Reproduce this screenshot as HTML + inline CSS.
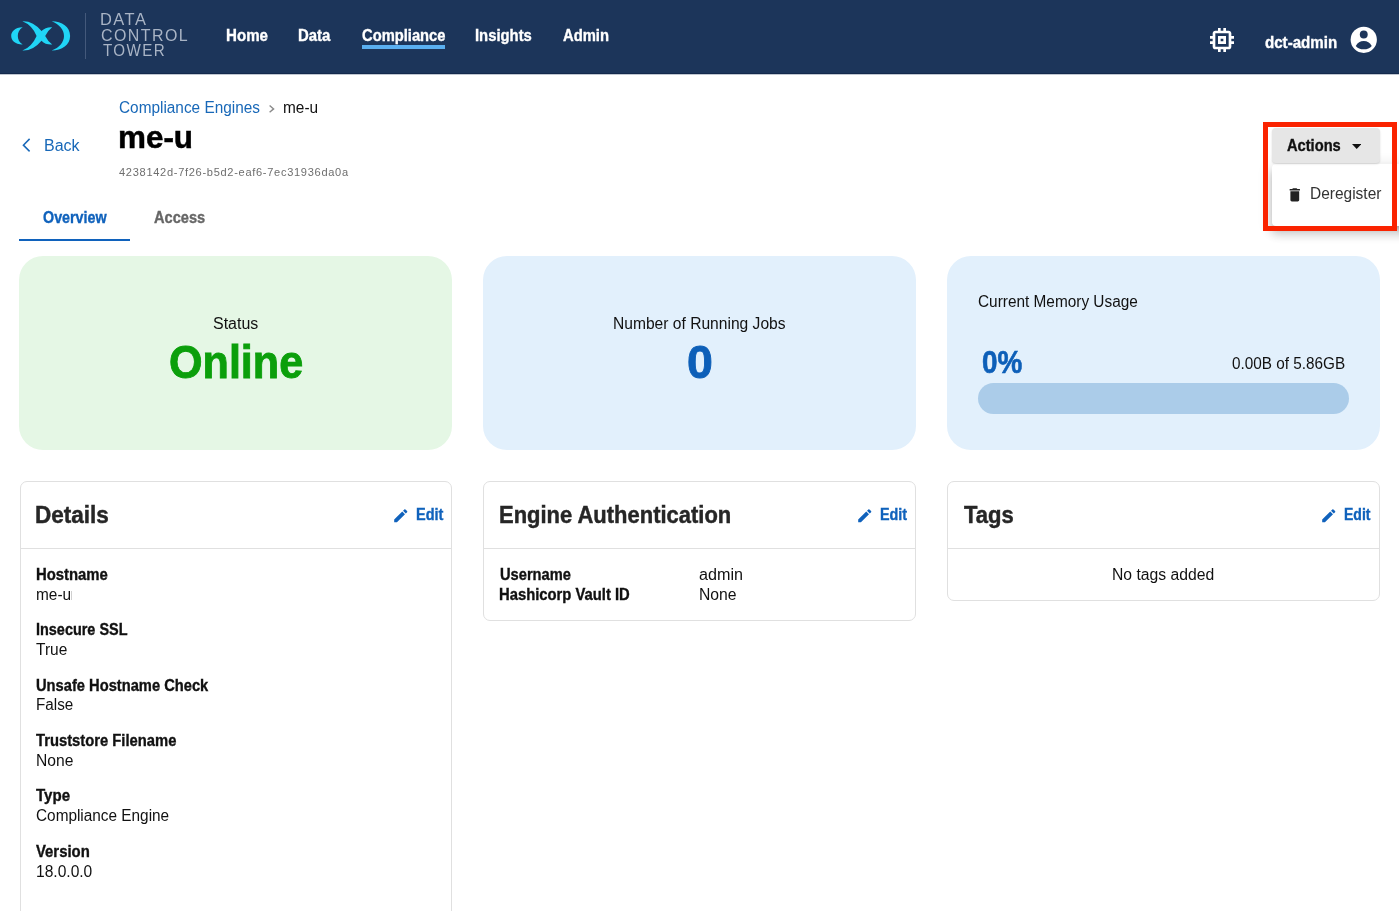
<!DOCTYPE html>
<html lang="en">
<head>
<meta charset="utf-8">
<title>Data Control Tower</title>
<style>
*{box-sizing:border-box;margin:0;padding:0}
html,body{width:1399px;height:911px;overflow:hidden;background:#fff}
body{font-family:"Liberation Sans",sans-serif;color:#111;position:relative}
.abs{position:absolute}
.t{position:absolute;white-space:nowrap;line-height:1;transform-origin:0 0;display:block}
#hdr{position:absolute;left:0;top:0;width:1399px;height:74px;background:#1c355a;border-bottom:1px solid #14294c}
#vdiv{position:absolute;left:85px;top:12.5px;width:1.3px;height:46px;background:#44597b}
#navul{position:absolute;left:362px;top:45px;width:83px;height:4px;background:#5aaff0}
#tabul{position:absolute;left:19.4px;top:239px;width:111px;height:2px;background:#1062bc}
.stat{position:absolute;top:256px;width:433px;height:194px;border-radius:24px}
#s1{left:19px;background:#e5f7e5}
#s2{left:483px;background:#e2f0fc}
#s3{left:947px;background:#e2f0fc}
#bar{position:absolute;left:978px;top:383.3px;width:370.5px;height:31.2px;border-radius:16px;background:#abcce9}
.panel{position:absolute;top:481px;width:433px;border:1px solid #e0e0e0;border-radius:7px;background:#fff}
.ph{position:absolute;left:0;top:0;width:100%;height:67px;border-bottom:1px solid #e0e0e0}
#menu{position:absolute;left:1272px;top:164px;width:150px;height:61.500px;background:#fff;border-radius:4px;box-shadow:0 5px 5px -3px rgba(0,0,0,.2),0 8px 10px 1px rgba(0,0,0,.14),0 3px 14px 2px rgba(0,0,0,.12)}
#abtn{position:absolute;left:1272px;top:128.3px;width:107.5px;height:34.5px;background:#e6e6e6;border-radius:4px;box-shadow:0 1px 2px rgba(0,0,0,.15)}
#red{position:absolute;left:1263px;top:121.5px;width:134px;height:109.3px;border:5px solid #fa2300}
</style>
</head>
<body>
<div id="hdr"></div>
<div id="hedge" style="position:absolute;left:0;top:74px;width:1399px;height:1px;background:rgba(28,53,90,.28)"></div>
<svg class="abs" style="left:0;top:0" width="90" height="74" viewBox="0 0 90 74">
  <g fill="#20d5f6">
    <path d="M22.7 27.3 C14.500 27.4 11.200 32 11.200 35.900 C11.200 39.800 14.500 44.400 22.700 44.500 C19.200 42.400 17.800 39 17.800 35.900 C17.800 32.800 19.200 29.400 22.700 27.300Z"/>
    <path d="M22.4 21.3 Q33 20.8 41.5 31.1 L45.2 35.9 Q47.9 41.3 52.2 44.5 Q45.7 45 41.5 40.7 L36.6 35.9 Q31.9 25 22.4 21.3Z"/>
    <path d="M 22.4 50.5 Q 33.0 51.0 41.5 40.7 L 45.2 35.9 Q 47.9 30.5 52.2 27.3 Q 45.7 26.8 41.5 31.1 L 36.6 35.9 Q 31.9 46.8 22.4 50.5 Z"/>
    <path d="M51.600 21.300 C62 21.500 70.100 27 70.100 35.900 C70.100 44.800 62 50.300 51.600 50.500 C59.500 47.500 64 41.800 64 35.900 C64 30 59.500 24.300 51.600 21.300Z"/>
  </g>
</svg>
<div id="vdiv"></div>
<div id="navul"></div>
<svg class="abs" style="left:1206px;top:23.5px" width="32" height="32" viewBox="0 0 24 24"><path fill="#fff" d="M15 9H9v6h6V9zm-2 4h-2v-2h2v2zm8-2V9h-2V7c0-1.100-.900-2-2-2h-2V3h-2v2h-2V3H9v2H7c-1.100 0-2 .900-2 2v2H3v2h2v2H3v2h2v2c0 1.100.900 2 2 2h2v2h2v-2h2v2h2v-2h2c1.100 0 2-.900 2-2v-2h2v-2h-2v-2h2zm-4 6H7V7h10v10z"/></svg>
<svg class="abs" style="left:1348.4px;top:24px" width="31.500" height="31.500" viewBox="0 0 24 24"><circle cx="12" cy="12" r="10" fill="#fff"/><circle cx="12" cy="8" r="3" fill="#1c355a"/><path fill="#1c355a" d="M5.900 16.700 Q8 13 12 13 Q16 13 18.100 16.700 Q16 19.300 12 19.300 Q8 19.300 5.900 16.700Z"/></svg>

<svg class="abs" style="left:266px;top:102px" width="12" height="14" viewBox="0 0 12 14"><path d="M3.600 3.500 L7.600 6.900 L3.600 10.300" fill="none" stroke="#8a8a8a" stroke-width="1.400"/></svg>
<svg class="abs" style="left:20px;top:136px" width="14" height="18" viewBox="0 0 14 18"><path d="M9.600 2.900 L3.400 9.150 L9.600 15.400" fill="none" stroke="#1868b8" stroke-width="1.500"/></svg>
<div id="tabul"></div>

<div class="stat" id="s1"></div>
<div class="stat" id="s2"></div>
<div class="stat" id="s3"></div>
<div id="bar"></div>

<div class="panel" style="left:20px;width:432px;height:460px;border-bottom-left-radius:0;border-bottom-right-radius:0"><div class="ph"></div></div>
<div class="panel" style="left:483px;height:140px"><div class="ph"></div></div>
<div class="panel" style="left:947px;height:120px"><div class="ph"></div></div>
<svg class="abs" style="left:392.3px;top:506.7px" width="17.500" height="17.500" viewBox="0 0 24 24"><path fill="#1062bc" d="M3 17.250V21h3.750L17.810 9.940l-3.750-3.750L3 17.250zM20.710 7.040c.390-.390.390-1.020 0-1.410l-2.340-2.340c-.390-.390-1.020-.390-1.410 0l-1.830 1.830 3.750 3.750 1.830-1.830z"/></svg>
<svg class="abs" style="left:856.2px;top:506.7px" width="17.500" height="17.500" viewBox="0 0 24 24"><path fill="#1062bc" d="M3 17.250V21h3.750L17.810 9.940l-3.750-3.750L3 17.250zM20.710 7.040c.390-.390.390-1.020 0-1.410l-2.340-2.340c-.390-.390-1.020-.390-1.410 0l-1.830 1.830 3.750 3.750 1.830-1.830z"/></svg>
<svg class="abs" style="left:1319.7px;top:506.7px" width="17.500" height="17.500" viewBox="0 0 24 24"><path fill="#1062bc" d="M3 17.250V21h3.750L17.810 9.940l-3.750-3.750L3 17.250zM20.710 7.040c.390-.390.390-1.020 0-1.410l-2.340-2.340c-.390-.390-1.020-.390-1.410 0l-1.830 1.830 3.750 3.750 1.830-1.830z"/></svg>

<div id="cur" style="position:absolute;left:70.5px;top:590.5px;width:1px;height:9.500px;background:#cfcfcf"></div>
<div id="menu"></div>
<div id="abtn"></div>
<svg class="abs" style="left:1351.7px;top:144.1px" width="9.400" height="5" viewBox="0 0 10 5.200" preserveAspectRatio="none"><path d="M0 0 L10 0 L5 5.200Z" fill="#111"/></svg>
<svg class="abs" style="left:1286.3px;top:185.6px" width="17.600" height="17.600" viewBox="0 0 24 24"><path fill="#222" d="M6 19c0 1.100.900 2 2 2h8c1.100 0 2-.900 2-2V7H6v12zM19 4h-3.500l-1-1h-5l-1 1H5v2h14V4z"/></svg>
<div id="tx" style="position:absolute;left:0;top:0;width:1399px;height:911px;will-change:transform">
<span class="t" id="dct1" style="left:100.00px;top:11.50px;font-size:16px;color:#a9b4c5;transform:scaleX(1.0269);letter-spacing:1.45px">DATA</span>
<span class="t" id="dct2" style="left:101.00px;top:27.50px;font-size:16px;color:#a9b4c5;transform:scaleX(0.9969);letter-spacing:1.45px">CONTROL</span>
<span class="t" id="dct3" style="left:103.00px;top:42.50px;font-size:16px;color:#a9b4c5;transform:scaleX(0.9477);letter-spacing:1.45px">TOWER</span>
<span class="t" id="n1" style="left:226.00px;top:27.50px;font-size:16px;font-weight:bold;color:#fff;transform:scaleX(0.9438);-webkit-text-stroke:0.35px #fff">Home</span>
<span class="t" id="n2" style="left:298.00px;top:27.50px;font-size:16px;font-weight:bold;color:#fff;transform:scaleX(0.9331);-webkit-text-stroke:0.35px #fff">Data</span>
<span class="t" id="n3" style="left:362.00px;top:27.50px;font-size:16px;font-weight:bold;color:#fff;transform:scaleX(0.9202);-webkit-text-stroke:0.35px #fff">Compliance</span>
<span class="t" id="n4" style="left:475.00px;top:27.50px;font-size:16px;font-weight:bold;color:#fff;transform:scaleX(0.9262);-webkit-text-stroke:0.35px #fff">Insights</span>
<span class="t" id="n5" style="left:563.00px;top:27.50px;font-size:16px;font-weight:bold;color:#fff;transform:scaleX(0.9235);-webkit-text-stroke:0.35px #fff">Admin</span>
<span class="t" id="user" style="left:1265.00px;top:34.50px;font-size:16px;font-weight:bold;color:#fff;transform:scaleX(0.9431);-webkit-text-stroke:0.35px #fff">dct-admin</span>
<span class="t" id="bc1" style="left:119.00px;top:99.50px;font-size:16px;color:#1868b8;transform:scaleX(0.9601)">Compliance Engines</span>
<span class="t" id="bc2" style="left:283.00px;top:99.50px;font-size:16px;color:#111;transform:scaleX(0.9630)">me-u</span>
<span class="t" id="back" style="left:44.00px;top:137.50px;font-size:16px;color:#1868b8;transform:scaleX(1.0011)">Back</span>
<span class="t" id="title" style="left:118.00px;top:121.75px;font-size:30.5px;font-weight:bold;color:#000;transform:scaleX(1.0301);-webkit-text-stroke:0.5px #000">me-u</span>
<span class="t" id="uuid" style="left:119.00px;top:166.50px;font-size:11px;color:#6e6e6e;transform:scaleX(1.0071);letter-spacing:0.68px">4238142d-7f26-b5d2-eaf6-7ec31936da0a</span>
<span class="t" id="tab1" style="left:43.00px;top:209.50px;font-size:16px;font-weight:bold;color:#1062bc;transform:scaleX(0.8946);-webkit-text-stroke:0.35px #1062bc">Overview</span>
<span class="t" id="tab2" style="left:154.00px;top:209.50px;font-size:16px;font-weight:bold;color:#666;transform:scaleX(0.9122);-webkit-text-stroke:0.35px #666">Access</span>
<span class="t" id="status" style="left:213.00px;top:315.50px;font-size:16px;color:#111;transform:scaleX(0.9970)">Status</span>
<span class="t" id="online" style="left:169.00px;top:338.75px;font-size:46.5px;font-weight:bold;color:#0b9f0b;transform:scaleX(0.9273);-webkit-text-stroke:0.9px #0b9f0b">Online</span>
<span class="t" id="jobs" style="left:613.00px;top:315.50px;font-size:16px;color:#111;transform:scaleX(0.9748)">Number of Running Jobs</span>
<span class="t" id="zero" style="left:687.00px;top:338.75px;font-size:46.5px;font-weight:bold;color:#0d5fb8;transform:scaleX(0.9998);-webkit-text-stroke:0.9px #0d5fb8">0</span>
<span class="t" id="mem" style="left:978.00px;top:293.50px;font-size:16px;color:#111;transform:scaleX(0.9612)">Current Memory Usage</span>
<span class="t" id="pct" style="left:982.00px;top:346.00px;font-size:32px;font-weight:bold;color:#0d5fb8;transform:scaleX(0.8711);-webkit-text-stroke:0.6px #0d5fb8">0%</span>
<span class="t" id="memv" style="left:1232.00px;top:355.50px;font-size:16px;color:#111;transform:scaleX(0.9558)">0.00B of 5.86GB</span>
<span class="t" id="p1t" style="left:35.00px;top:502.50px;font-size:24px;font-weight:bold;color:#262626;transform:scaleX(0.9383);-webkit-text-stroke:0.45px #262626">Details</span>
<span class="t" id="e1" style="left:416.00px;top:506.50px;font-size:16px;font-weight:bold;color:#1062bc;transform:scaleX(0.9058);-webkit-text-stroke:0.35px #1062bc">Edit</span>
<span class="t" id="k1" style="left:36.00px;top:566.50px;font-size:16px;font-weight:bold;color:#111;transform:scaleX(0.9284);-webkit-text-stroke:0.35px #111">Hostname</span>
<span class="t" id="v1" style="left:36.00px;top:586.50px;font-size:16px;color:#111;transform:scaleX(0.9621)">me-u</span>
<span class="t" id="k2" style="left:36.00px;top:621.50px;font-size:16px;font-weight:bold;color:#111;transform:scaleX(0.9025);-webkit-text-stroke:0.35px #111">Insecure SSL</span>
<span class="t" id="v2" style="left:36.00px;top:641.50px;font-size:16px;color:#111;transform:scaleX(0.9670)">True</span>
<span class="t" id="k3" style="left:36.00px;top:677.50px;font-size:16px;font-weight:bold;color:#111;transform:scaleX(0.9181);-webkit-text-stroke:0.35px #111">Unsafe Hostname Check</span>
<span class="t" id="v3" style="left:36.00px;top:696.50px;font-size:16px;color:#111;transform:scaleX(0.9516)">False</span>
<span class="t" id="k4" style="left:36.00px;top:732.50px;font-size:16px;font-weight:bold;color:#111;transform:scaleX(0.9233);-webkit-text-stroke:0.35px #111">Truststore Filename</span>
<span class="t" id="v4" style="left:36.00px;top:752.50px;font-size:16px;color:#111;transform:scaleX(0.9770)">None</span>
<span class="t" id="k5" style="left:36.00px;top:787.50px;font-size:16px;font-weight:bold;color:#111;transform:scaleX(0.9421);-webkit-text-stroke:0.35px #111">Type</span>
<span class="t" id="v5" style="left:36.00px;top:807.50px;font-size:16px;color:#111;transform:scaleX(0.9596)">Compliance Engine</span>
<span class="t" id="k6" style="left:36.00px;top:843.50px;font-size:16px;font-weight:bold;color:#111;transform:scaleX(0.9296);-webkit-text-stroke:0.35px #111">Version</span>
<span class="t" id="v6" style="left:36.00px;top:863.50px;font-size:16px;color:#111;transform:scaleX(0.9732)">18.0.0.0</span>
<span class="t" id="p2t" style="left:499.00px;top:502.50px;font-size:24px;font-weight:bold;color:#262626;transform:scaleX(0.9152);-webkit-text-stroke:0.45px #262626">Engine Authentication</span>
<span class="t" id="e2" style="left:880.00px;top:506.50px;font-size:16px;font-weight:bold;color:#1062bc;transform:scaleX(0.8979);-webkit-text-stroke:0.35px #1062bc">Edit</span>
<span class="t" id="k7" style="left:500.00px;top:566.50px;font-size:16px;font-weight:bold;color:#111;transform:scaleX(0.9163);-webkit-text-stroke:0.35px #111">Username</span>
<span class="t" id="k8" style="left:499.00px;top:586.50px;font-size:16px;font-weight:bold;color:#111;transform:scaleX(0.9250);-webkit-text-stroke:0.35px #111">Hashicorp Vault ID</span>
<span class="t" id="v7" style="left:699.00px;top:566.50px;font-size:16px;color:#111;transform:scaleX(1.0089)">admin</span>
<span class="t" id="v8" style="left:699.00px;top:586.50px;font-size:16px;color:#111;transform:scaleX(0.9829)">None</span>
<span class="t" id="p3t" style="left:964.00px;top:502.50px;font-size:24px;font-weight:bold;color:#262626;transform:scaleX(0.9183);-webkit-text-stroke:0.45px #262626">Tags</span>
<span class="t" id="e3" style="left:1344.00px;top:506.50px;font-size:16px;font-weight:bold;color:#1062bc;transform:scaleX(0.8767);-webkit-text-stroke:0.35px #1062bc">Edit</span>
<span class="t" id="v9" style="left:1112.00px;top:566.50px;font-size:16px;color:#111;transform:scaleX(0.9824)">No tags added</span>
<span class="t" id="act" style="left:1287.00px;top:137.50px;font-size:16px;font-weight:bold;color:#111;transform:scaleX(0.9158);-webkit-text-stroke:0.35px #111">Actions</span>
<span class="t" id="dereg" style="left:1310.00px;top:185.50px;font-size:16px;color:#333;transform:scaleX(0.9675)">Deregister</span>
</div>
<div id="red"></div>
</body>
</html>
